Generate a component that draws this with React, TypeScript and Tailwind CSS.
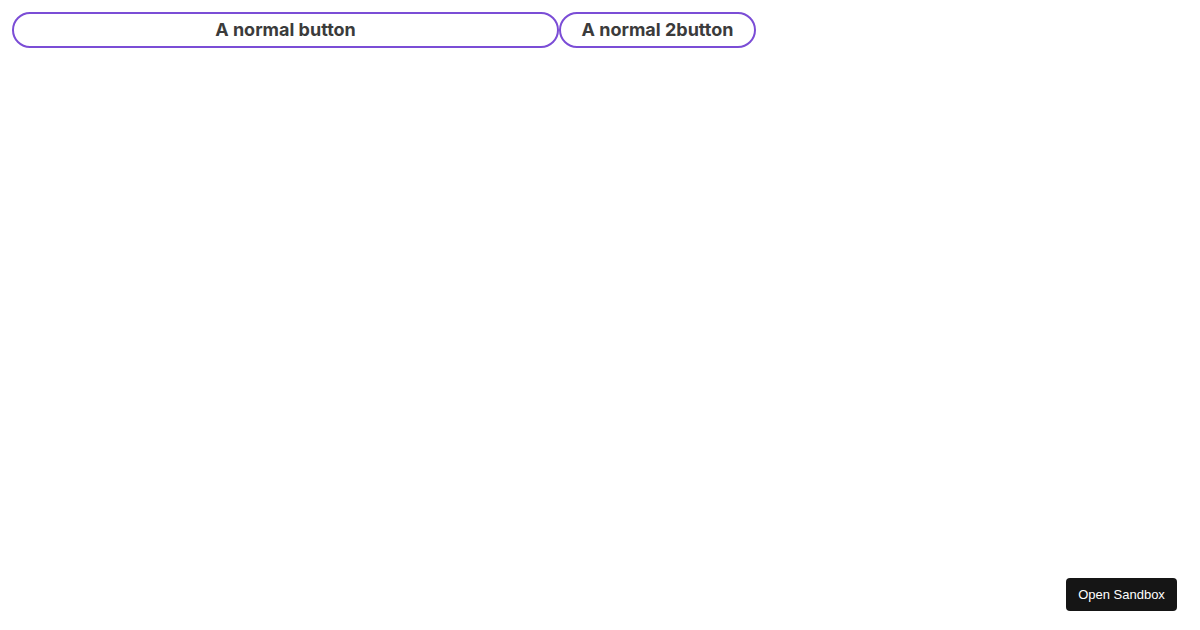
import React from 'react';

export default function App() {
  return (
    <div className="relative h-[630px] w-[1200px] bg-white font-['Inter',sans-serif]">
      {/* Buttons row */}
      <div className="flex p-3">
        <button className="h-9 w-[547px] rounded-full border-2 border-[#7b4dd6] bg-white text-lg font-bold text-[#3b3b3b]">
          A normal button
        </button>
        <button className="h-9 w-[197px] rounded-full border-2 border-[#7b4dd6] bg-white text-lg font-bold text-[#3b3b3b]">
          A normal 2button
        </button>
      </div>

      {/* Floating sandbox link */}
      <button className="absolute bottom-[19px] right-[23px] h-[33px] w-[111px] rounded-[4px] bg-[#151515] text-[13px] text-white font-['Liberation_Sans',sans-serif]">
        Open Sandbox
      </button>
    </div>
  );
}
